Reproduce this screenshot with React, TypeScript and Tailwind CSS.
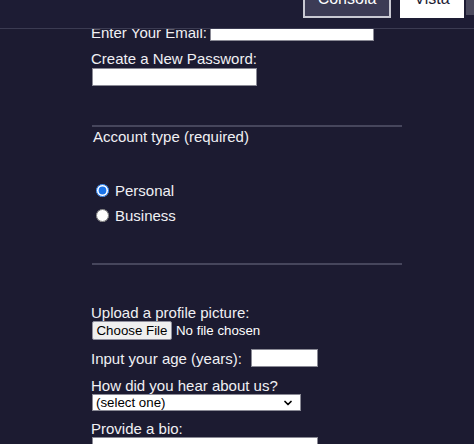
import { ChevronDown } from "lucide-react";

const font = { fontFamily: '"Liberation Sans", Arial, sans-serif' };

const Header = () => (
  <header className="h-[29px] shrink-0 overflow-hidden border-b border-[#3b3b52] bg-[#1d1c34] flex items-end justify-end pb-[10px]">
    <button className="h-[40px] w-[88px] shrink-0 border-2 border-[#c9c9d3] bg-[#3c3b55] text-[16px] text-white">
      Consola
    </button>
    <button className="ml-[9px] h-[40px] w-[64px] shrink-0 border-2 border-white bg-white text-[16px] text-[#1d1c34]">
      Vista
    </button>
    <span className="ml-[2px] h-[44px] w-[8px] shrink-0 self-start -mt-[29px] bg-[#4b4a5e]" />
  </header>
);

const Field = ({ w }: { w: string }) => (
  <input type="text" className={`${w} h-[18px] shrink-0 border border-[#8a8a95] bg-white px-1 text-[13px] text-black outline-none`} />
);

const Radio = ({ label, checked }: { label: string; checked?: boolean }) => (
  <label className="flex h-[25px] items-center">
    <input
      type="radio"
      name="account"
      defaultChecked={checked}
      className="ml-[5px] mr-[6px] h-[13px] w-[13px] accent-[#1a73e8]"
    />
    <span>{label}</span>
  </label>
);

export default function App() {
  return (
    <div className="flex h-[444px] w-[474px] flex-col overflow-hidden bg-[#1c1b31] text-[15px] leading-[17px] text-[#f0f0f4]" style={font}>
      <Header />
      <main className="flex-1 overflow-hidden">
        <form className="-mt-[6px] ml-[91px] w-[311px]">
          <div className="flex h-[18px] items-center gap-[3px]">
            <span>Enter Your Email:</span>
            <Field w="w-[164px]" />
          </div>

          <div className="mt-[9px]">Create a New Password:</div>
          <div className="mt-[1px] flex pl-[1px]">
            <Field w="w-[165px]" />
          </div>

          <div className="mt-[39px] ml-[1px] h-[2px] bg-[#46465c]" />
          <div className="mt-[1px] pl-[2px]">Account type (required)</div>

          <div className="mt-[33px]">
            <Radio label="Personal" checked />
            <Radio label="Business" />
          </div>

          <div className="mt-[35px] ml-[1px] h-[2px] bg-[#46465c]" />

          <div className="mt-[39px]">Upload a profile picture:</div>
          <div className="flex h-[19px] items-center gap-[4px] pl-[1px]">
            <span className="flex h-[19px] w-[80px] items-center justify-center rounded-[2px] border border-[#8f8f9d] bg-[#efefef] text-[13.3px] text-black">
              Choose File
            </span>
            <span className="text-[13.3px] text-white">No file chosen</span>
          </div>

          <div className="mt-[9px] flex h-[18px] items-center gap-[9px]">
            <span>Input your age (years):</span>
            <Field w="w-[67px]" />
          </div>

          <div className="mt-[10px]">How did you hear about us?</div>
          <div className="flex h-[17px] w-[209px] items-center justify-between ml-[1px] border border-[#8a8a95] bg-white pl-[3px] pr-[6px] text-[13.3px] text-black">
            <span>(select one)</span>
            <ChevronDown className="h-[12px] w-[12px]" strokeWidth={3.5} />
          </div>

          <div className="mt-[9px]">Provide a bio:</div>
          <textarea
            rows={3}
            placeholder="All about you and your interests"
            className="ml-[1px] block w-[226px] resize-none border border-[#8a8a95] bg-white px-[9px] py-[3px] text-[13.3px] text-black placeholder:text-[#757575]"
          />
        </form>
      </main>
    </div>
  );
}
